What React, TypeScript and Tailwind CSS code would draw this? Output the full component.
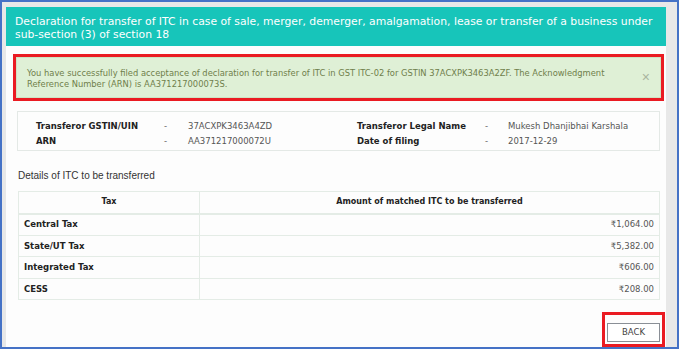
const rows = [
  { tax: "Central Tax", amount: "₹1,064.00" },
  { tax: "State/UT Tax", amount: "₹5,382.00" },
  { tax: "Integrated Tax", amount: "₹606.00" },
  { tax: "CESS", amount: "₹208.00" },
];

const verdana = "font-['DejaVu_Sans',Verdana,sans-serif]";

const App = () => {
  return (
    <div className="w-[679px] h-[349px] overflow-hidden border-2 border-[#4572c6] bg-[#e8e8e8] pl-[4px] pt-[5px] pr-[10px]">
      <div className="w-[660px] h-[340px] bg-[#fdfdfd] flex flex-col">
        <div className={`h-[40px] bg-[#17c5ba] text-white ${verdana} text-[10.8px] leading-[13px] pl-[9px] pr-0 pt-[8px]`}>
          Declaration for transfer of ITC in case of sale, merger, demerger, amalgamation, lease or transfer of a business under sub-section (3) of section 18
        </div>

        <div className="mt-[8px] ml-[7px] w-[651px] h-[49px] border-[3px] border-[#ea1b22] bg-[#fdfdfd]">
          <div className={`h-full border border-[#cfe3c3] bg-[#dff0d6] text-[#6f7f4b] ${verdana} text-[8.35px] leading-[11px] pl-[10px] pt-[10px] pr-[10px] flex`}>
            <p className="flex-1">
              You have successfully filed acceptance of declaration for transfer of ITC in GST ITC-02 for GSTIN 37ACXPK3463A2ZF. The Acknowledgment Reference Number (ARN) is AA371217000073S.
            </p>
            <span className="text-[#a9b5a0] text-[14px] leading-[14px] pt-[2px] pl-[6px] font-['Liberation_Sans',sans-serif]">×</span>
          </div>
        </div>

        <div className={`mt-[10px] ml-[11px] w-[643px] h-[42px] border border-[#e4e9e6] ${verdana} text-[8.5px] leading-[12px] text-[#222] pl-[18px] pt-[8px] grid grid-cols-[128px_24px_169px_128px_23px_1fr]`}>
          <span className="font-bold">Transferor GSTIN/UIN</span>
          <span className="text-[#666]">-</span>
          <span className="text-[#555]">37ACXPK3463A4ZD</span>
          <span className="font-bold">Transferor Legal Name</span>
          <span className="text-[#666]">-</span>
          <span className="text-[#555]">Mukesh Dhanjibhai Karshala</span>
          <span className="font-bold">ARN</span>
          <span className="text-[#666]">-</span>
          <span className="text-[#555]">AA371217000072U</span>
          <span className="font-bold">Date of filing</span>
          <span className="text-[#666]">-</span>
          <span className="text-[#555]">2017-12-29</span>
        </div>

        <div className="mt-[19px] ml-[12px] font-['Liberation_Sans',Arial,sans-serif] text-[10px] leading-[12px] text-[#333]">
          Details of ITC to be transferred
        </div>

        <table className={`mt-[9px] ml-[12px] w-[642px] border-collapse ${verdana} text-[8.5px] text-[#222]`}>
          <thead>
            <tr className="h-[22px] border-b-2 border-[#e4ece6]">
              <th className="w-[181px] border border-[#e4ece6] font-bold text-center text-[8px]">Tax</th>
              <th className="border border-[#e4ece6] font-bold text-center text-[8px]">Amount of matched ITC to be transferred</th>
            </tr>
          </thead>
          <tbody>
            {rows.map((r) => (
              <tr key={r.tax} className="h-[21.5px]">
                <td className="border border-[#e4ece6] font-bold pl-[5px]">{r.tax}</td>
                <td className="border border-[#e4ece6] text-right pr-[5px] text-[#555]">{r.amount}</td>
              </tr>
            ))}
          </tbody>
        </table>

        <div className="flex justify-end mt-[12px] pr-[1px]">
          <div className="border-[3px] border-[#ea1b22] p-[2px]">
            <button className={`w-[53px] h-[19px] border border-[#8a8f96] bg-white ${verdana} text-[8.5px] text-[#444]`}>
              BACK
            </button>
          </div>
        </div>
      </div>
    </div>
  );
};

export default App;
